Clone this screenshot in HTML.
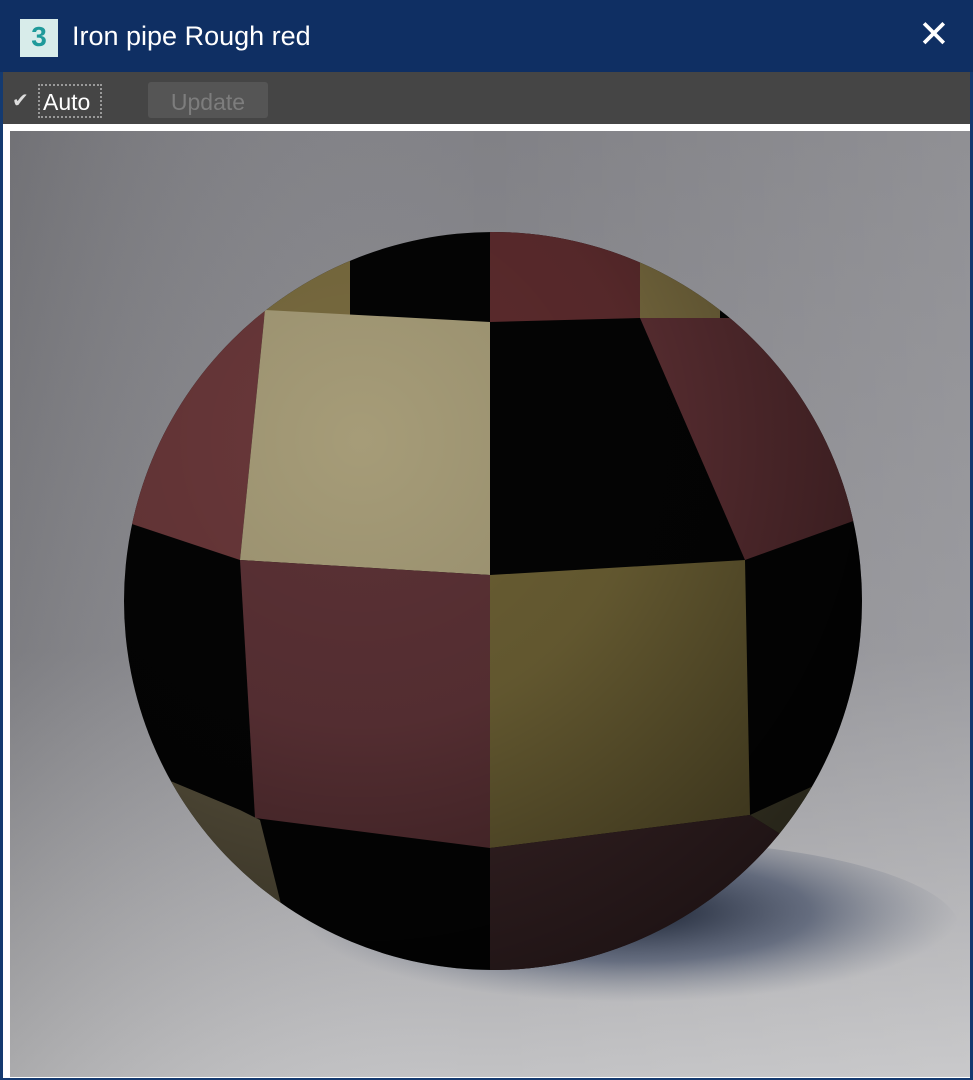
<!DOCTYPE html>
<html><head><style>
html,body{margin:0;padding:0;width:973px;height:1080px;overflow:hidden;background:#143a70}
.title{position:absolute;left:0;top:0;width:973px;height:72px;background:#0f2f63}
.ico{position:absolute;left:20px;top:19px;width:38px;height:38px;background:#d8ecea}
.ico span{position:absolute;left:0;top:2px;width:38px;text-align:center;font:bold 28px "Liberation Sans",sans-serif;color:#1f9a9a}
.tt{position:absolute;left:72px;top:21px;font:27px "Liberation Sans",sans-serif;color:#fff}
.x{position:absolute;left:918px;top:12px;font:38px "Liberation Sans",sans-serif;color:#fff}
.tb{position:absolute;left:3px;top:72px;width:967px;height:52px;background:#454545}
.chk{position:absolute;left:12px;top:88px;font:20px "DejaVu Sans",sans-serif;color:#ddd}
.auto{position:absolute;left:38px;top:84px;width:64px;height:34px;border:2px dotted #999;box-sizing:border-box;font:23px "Liberation Sans",sans-serif;color:#fff;padding:3px 0 0 3px}
.upd{position:absolute;left:148px;top:82px;width:120px;height:36px;background:#555;border-radius:3px;font:23px "Liberation Sans",sans-serif;color:#7d7d7d;text-align:center;line-height:40px}
.frame{position:absolute;left:3px;top:124px;width:967px;height:954px;background:#fff}
svg{position:absolute;left:10px;top:131px}
</style></head><body>
<div class="title"><div class="ico"><span>3</span></div><div class="tt">Iron pipe Rough red</div><div class="x">✕</div></div>
<div class="tb"></div>
<div class="chk">✔</div><div class="auto">Auto</div><div class="upd">Update</div>
<div class="frame"></div>
<svg width="960" height="946" viewBox="10 131 960 946">
<defs>
<linearGradient id="bg" x1="0" y1="0" x2="0" y2="1">
<stop offset="0" stop-color="#818186"/><stop offset="0.55" stop-color="#8e8e93"/><stop offset="1" stop-color="#c2c2c4"/></linearGradient>
<linearGradient id="bgh" x1="0" y1="0" x2="1" y2="0">
<stop offset="0" stop-color="#000" stop-opacity="0.12"/><stop offset="0.5" stop-color="#fff" stop-opacity="0"/><stop offset="1" stop-color="#fff" stop-opacity="0.12"/></linearGradient>
<radialGradient id="sh" cx="0.5" cy="0.4" r="0.5"><stop offset="0" stop-color="#0a1222" stop-opacity="0.9"/><stop offset="0.55" stop-color="#243250" stop-opacity="0.55"/><stop offset="1" stop-color="#5a6478" stop-opacity="0"/></radialGradient>
<radialGradient id="lit" cx="0.32" cy="0.28" r="0.85"><stop offset="0" stop-color="#000" stop-opacity="0"/><stop offset="0.45" stop-color="#000" stop-opacity="0.1"/><stop offset="1" stop-color="#000" stop-opacity="0.55"/></radialGradient>
<clipPath id="c"><circle cx="493" cy="601" r="369"/></clipPath>
</defs>
<rect x="10" y="131" width="960" height="946" fill="url(#bg)"/>
<rect x="10" y="131" width="960" height="946" fill="url(#bgh)"/>
<ellipse cx="630" cy="930" rx="330" ry="90" fill="url(#sh)"/>
<g clip-path="url(#c)">
<rect x="120" y="230" width="750" height="750" fill="#040404"/>
<polygon points="260,232 350,232 350,320 250,318" fill="#7a6c40"/>
<polygon points="490,232 640,232 640,318 490,322" fill="#5e2c2e"/>
<polygon points="640,232 720,232 720,318 640,318" fill="#7a6c40"/>
<polygon points="120,300 265,310 240,560 120,520" fill="#6a383a"/>
<polygon points="265,310 490,322 490,575 240,560" fill="#a69c78"/>
<polygon points="640,318 740,318 870,420 870,515 745,560" fill="#5e3034"/>
<polygon points="240,560 490,575 490,848 255,818" fill="#5c3236"/>
<polygon points="490,575 745,560 750,815 490,848" fill="#6c6034"/>
<polygon points="120,760 240,810 260,820 300,980 120,980" fill="#5e5640"/>
<polygon points="490,848 750,815 790,840 760,980 490,980" fill="#3c2628"/>
<polygon points="750,815 870,760 870,980 780,980 790,840" fill="#4a4630"/>
<rect x="120" y="230" width="750" height="750" fill="url(#lit)"/>
</g>
</svg>
</body></html>
